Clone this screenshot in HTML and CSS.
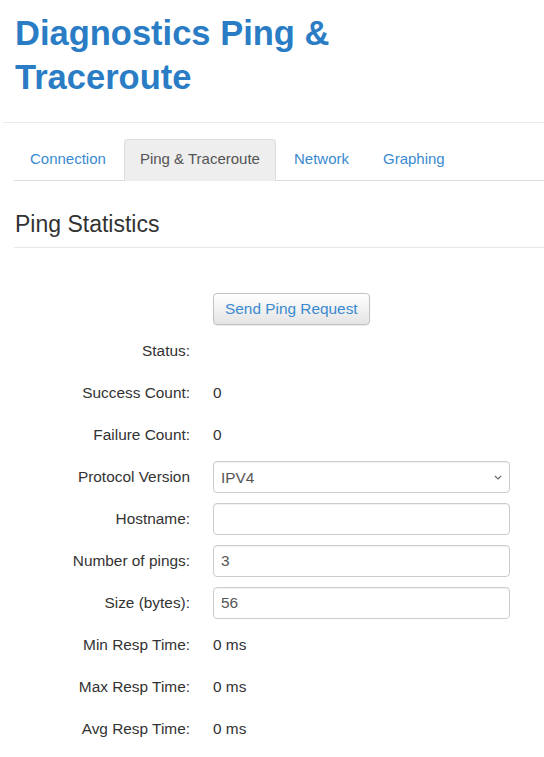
FILE: index.html
```html
<!DOCTYPE html>
<html lang="en">
<head>
<meta charset="utf-8">
<title>Diagnostics Ping &amp; Traceroute</title>
<link rel="stylesheet" href="styles.css">
</head>
<body>
  <h1 class="page-title">Diagnostics Ping &amp; Traceroute</h1>
  <div class="divider"></div>
  <ul class="tabs">
    <li><a class="tab" href="#">Connection</a></li>
    <li><a class="tab active" href="#">Ping &amp; Traceroute</a></li>
    <li><a class="tab" href="#">Network</a></li>
    <li><a class="tab" href="#">Graphing</a></li>
  </ul>
  <h2 class="section-title">Ping Statistics</h2>
  <form class="form">
    <div class="label"></div>
    <div class="control"><button type="button" class="btn">Send Ping Request</button></div>

    <div class="label">Status:</div>
    <div class="control value"></div>

    <div class="label">Success Count:</div>
    <div class="control value">0</div>

    <div class="label">Failure Count:</div>
    <div class="control value">0</div>

    <div class="label">Protocol Version</div>
    <div class="control select-wrap">
      <select class="input select"><option>IPV4</option><option>IPV6</option></select>
      <svg class="chevron" width="8" height="5" viewBox="0 0 8 5"><path d="M0.8 0.8 L4 4 L7.2 0.8" fill="none" stroke="#666" stroke-width="1.2"/></svg>
    </div>

    <div class="label">Hostname:</div>
    <div class="control"><input class="input" type="text" value=""></div>

    <div class="label">Number of pings:</div>
    <div class="control"><input class="input" type="text" value="3"></div>

    <div class="label">Size (bytes):</div>
    <div class="control"><input class="input" type="text" value="56"></div>

    <div class="label">Min Resp Time:</div>
    <div class="control value">0 ms</div>

    <div class="label">Max Resp Time:</div>
    <div class="control value">0 ms</div>

    <div class="label">Avg Resp Time:</div>
    <div class="control value">0 ms</div>
  </form>
</body>
</html>
```

FILE: styles.css
```css
html, body {
  margin: 0;
  padding: 0;
  background: #fff;
}
body {
  font-family: "Liberation Sans", Arial, Helvetica, sans-serif;
  font-size: 15px;
  color: #333;
}
.page-title {
  margin: 11px 0 0 15px;
  font-size: 34.5px;
  line-height: 44px;
  font-weight: 700;
  color: #2a7dc5;
  width: 340px;
}
.divider {
  margin: 23px 0 0 3px;
  height: 1px;
  background: #eaeaea;
}
.tabs {
  list-style: none;
  margin: 16px 0 0 14px;
  padding: 0;
  display: flex;
  border-bottom: 1px solid #ddd;
}
.tabs li {
  margin-bottom: -1px;
}
.tab {
  display: block;
  padding: 9px 15px 11px;
  font-size: 15px;
  line-height: 20px;
  margin-right: 2px;
  border: 1px solid transparent;
  border-radius: 4px 4px 0 0;
  color: #3a8ad0;
  text-decoration: none;
}
.tab.active {
  background: #eee;
  border-color: #ddd #ddd transparent;
  color: #555;
}
.section-title {
  margin: 29px 0 0 14px;
  padding: 0 0 9px 1px;
  font-size: 23px;
  line-height: 28px;
  font-weight: 400;
  color: #333;
  border-bottom: 1px solid #e8e8e8;
}
.form {
  margin: 45px 0 0 0;
  display: grid;
  grid-template-columns: 190px 297px;
  column-gap: 23px;
  row-gap: 10px;
  grid-auto-rows: 32px;
  font-size: 15.4px;
}
.label {
  text-align: right;
  line-height: 32px;
  color: #333;
  white-space: nowrap;
}
.control {
  line-height: 32px;
}
.value {
  color: #333;
}
.btn {
  display: block;
  height: 32px;
  padding: 0 11px;
  font-family: inherit;
  font-size: 15.4px;
  line-height: 20px;
  color: #3a8ad0;
  background: linear-gradient(#ffffff, #e4e4e4);
  border: 1px solid #c2c2c2;
  border-radius: 4px;
  box-shadow: 0 1px 1px rgba(0, 0, 0, 0.08);
}
.input {
  display: block;
  box-sizing: border-box;
  width: 100%;
  height: 32px;
  margin: 0;
  padding: 0 7px;
  font-family: inherit;
  font-size: 15.4px;
  color: #555;
  background: #fff;
  border: 1px solid #ccc;
  border-radius: 4px;
  box-shadow: inset 0 1px 1px rgba(0, 0, 0, 0.06);
  outline: none;
}
.select {
  -webkit-appearance: none;
  appearance: none;
}
.select-wrap {
  position: relative;
}
.chevron {
  position: absolute;
  right: 8px;
  top: 14px;
  pointer-events: none;
}
```
